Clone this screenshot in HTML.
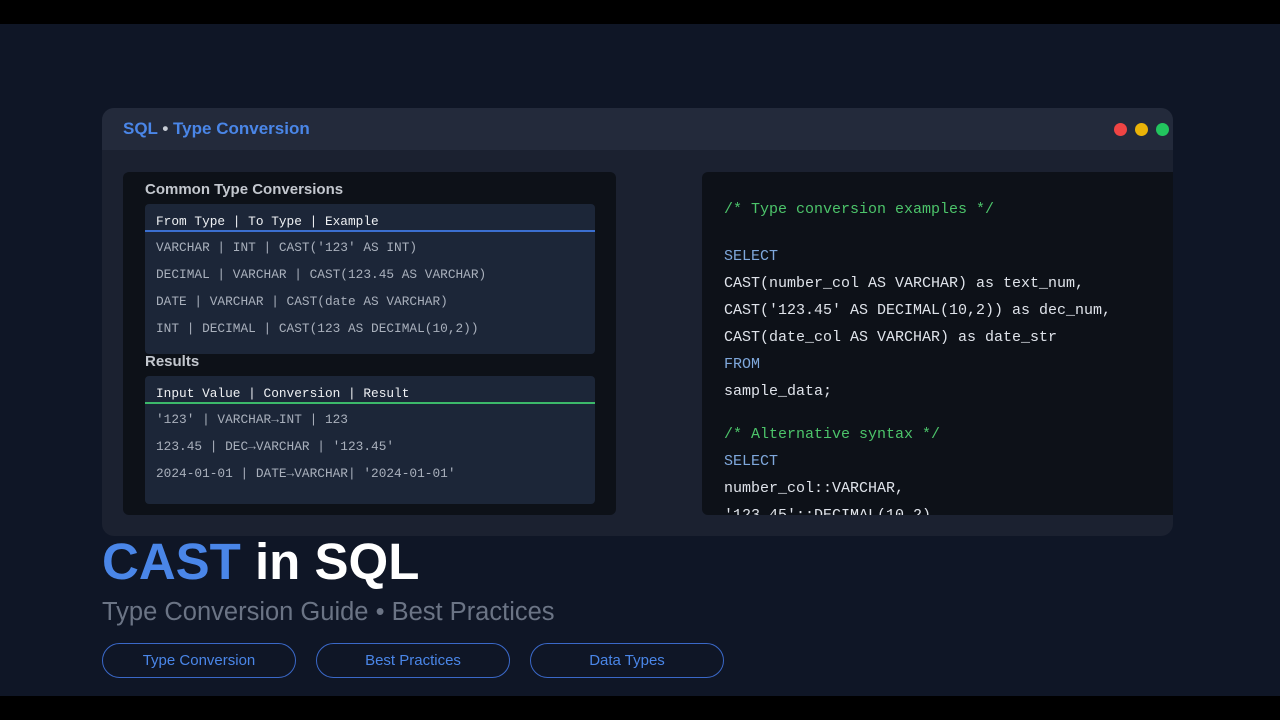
<!DOCTYPE html>
<html><head><meta charset="utf-8"><style>
*{margin:0;padding:0;box-sizing:border-box}
body{width:1280px;height:720px;background:#000;position:relative;overflow:hidden;font-family:"Liberation Sans",sans-serif}
.bg{position:absolute;left:0;top:24px;width:1280px;height:672px;background:#0f1626}
.card{position:absolute;left:102px;top:108px;width:1071px;height:428px;background:#1b2130;border-radius:12px}
.hdr{position:absolute;left:0;top:0;width:100%;height:42px;background:#232a3b;border-radius:12px 12px 0 0}
.hdr .t{position:absolute;left:21px;top:11px;font-weight:bold;font-size:17px;color:#4a86e8}
.hdr .t span{color:#c8cdd6}
.dot{position:absolute;top:15px;width:13px;height:13px;border-radius:50%}
.lp{position:absolute;left:21px;top:64px;width:493px;height:343px;background:#0d1118;border-radius:6px}
.rp{position:absolute;left:600px;top:64px;width:471px;height:343px;background:#0d1118;border-radius:6px 0 0 6px;overflow:hidden}
.h{position:absolute;left:22px;font-weight:bold;font-size:15px;color:#c3c7ce}
.tbl{position:absolute;left:22px;width:450px;background:#1c2638;border-radius:4px;font-family:"Liberation Mono",monospace;font-size:12.8px;color:#a9b0bc}
.tbl .th{height:28px;padding:10px 0 0 11px;color:#eef0f3;border-bottom:2px solid #3b6fd0}
.tbl .r{height:27px;padding:8px 0 0 11px}
.code{position:absolute;left:22px;top:24px;font-family:"Liberation Mono",monospace;font-size:15px;color:#dfe3ea;line-height:27px;white-space:pre}
.code .sp{height:16px}
.code .sp1{height:20px}
.c{color:#4cc46a}.k{color:#7fa8dc}
.title{position:absolute;left:102px;top:532px;font-weight:bold;font-size:51px;color:#fff}
.title span{color:#4a86e8}
.sub{position:absolute;left:102px;top:598px;font-size:25.5px;color:#6b7485}
.pill{position:absolute;top:643px;width:194px;height:35px;border:1.5px solid #3a68c8;border-radius:18px;color:#4a86e8;font-size:15px;text-align:center;line-height:33px}
</style></head><body>
<div class="bg"></div>
<div class="card">
 <div class="hdr"><div class="t">SQL <span>•</span> Type Conversion</div>
  <div class="dot" style="left:1012px;background:#ef4444"></div>
  <div class="dot" style="left:1033px;background:#eab308"></div>
  <div class="dot" style="left:1054px;background:#22c55e"></div></div>
 <div class="lp">
  <div class="h" style="top:9px">Common Type Conversions</div>
  <div class="tbl" style="top:32px;height:150px">
   <div class="th">From Type | To Type | Example</div>
   <div class="r">VARCHAR | INT | CAST('123' AS INT)</div>
   <div class="r">DECIMAL | VARCHAR | CAST(123.45 AS VARCHAR)</div>
   <div class="r">DATE | VARCHAR | CAST(date AS VARCHAR)</div>
   <div class="r">INT | DECIMAL | CAST(123 AS DECIMAL(10,2))</div>
  </div>
  <div class="h" style="top:181px">Results</div>
  <div class="tbl" style="top:204px;height:128px">
   <div class="th" style="border-color:#3cb96a">Input Value | Conversion | Result</div>
   <div class="r">'123' | VARCHAR→INT | 123</div>
   <div class="r">123.45 | DEC→VARCHAR | '123.45'</div>
   <div class="r">2024-01-01 | DATE→VARCHAR| '2024-01-01'</div>
  </div>
 </div>
 <div class="rp"><div class="code"><div class="c">/* Type conversion examples */</div><div class="sp1"></div><div class="k">SELECT</div><div>CAST(number_col AS VARCHAR) as text_num,</div><div>CAST('123.45' AS DECIMAL(10,2)) as dec_num,</div><div>CAST(date_col AS VARCHAR) as date_str</div><div class="k">FROM</div><div>sample_data;</div><div class="sp"></div><div class="c">/* Alternative syntax */</div><div class="k">SELECT</div><div>number_col::VARCHAR,</div><div>'123.45'::DECIMAL(10,2)</div></div></div>
</div>
<div class="title"><span>CAST</span> in SQL</div>
<div class="sub">Type Conversion Guide • Best Practices</div>
<div class="pill" style="left:102px">Type Conversion</div>
<div class="pill" style="left:316px">Best Practices</div>
<div class="pill" style="left:530px">Data Types</div>
</body></html>
